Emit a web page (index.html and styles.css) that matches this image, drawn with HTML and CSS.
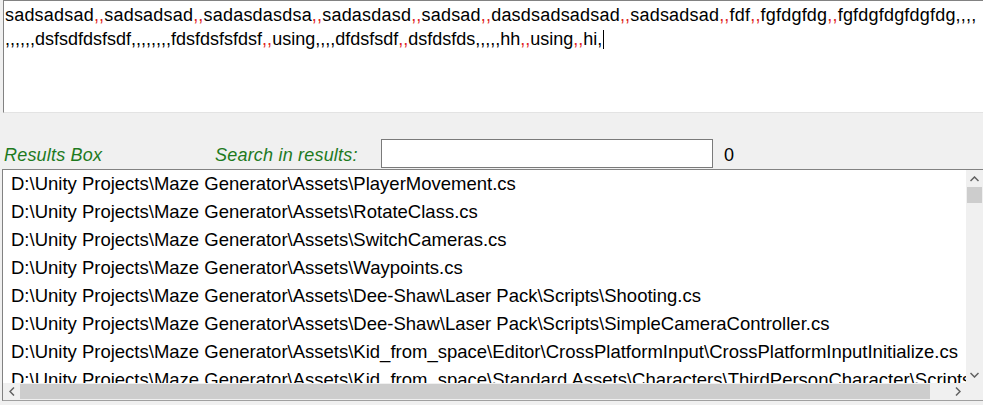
FILE: index.html
```html
<!DOCTYPE html>
<html>
<head>
<meta charset="utf-8">
<link rel="stylesheet" href="styles.css">
</head>
<body>
<div class="editor">
  <div class="line line-wide">sadsadsad<span class="r">,,</span>sadsadsad<span class="r">,,</span>sadasdasdsa<span class="r">,,</span>sadasdasd<span class="r">,,</span>sadsad<span class="r">,,</span>dasdsadsadsad<span class="r">,,</span>sadsadsad<span class="r">,,</span>fdf<span class="r">,,</span>fgfdgfdg<span class="r">,,</span>fgfdgfdgfdgfdg,,,,</div>
  <div class="line">,,,,,,dsfsdfdsfsdf,,,,,,,,fdsfdsfsfdsf<span class="r">,,</span>using,,,,dfdsfsdf<span class="r">,,</span>dsfdsfds,,,,,hh<span class="r">,,</span>using<span class="r">,,</span>hi,<span class="caret"></span></div>
</div>
<div class="toolbar">
  <span class="label label-results">Results Box</span>
  <span class="label label-search">Search in results:</span>
  <div class="search-input"></div>
  <span class="count">0</span>
</div>
<div class="list">
  <div class="rows">
    <div class="row">D:\Unity Projects\Maze Generator\Assets\PlayerMovement.cs</div>
    <div class="row">D:\Unity Projects\Maze Generator\Assets\RotateClass.cs</div>
    <div class="row">D:\Unity Projects\Maze Generator\Assets\SwitchCameras.cs</div>
    <div class="row">D:\Unity Projects\Maze Generator\Assets\Waypoints.cs</div>
    <div class="row">D:\Unity Projects\Maze Generator\Assets\Dee-Shaw\Laser Pack\Scripts\Shooting.cs</div>
    <div class="row">D:\Unity Projects\Maze Generator\Assets\Dee-Shaw\Laser Pack\Scripts\SimpleCameraController.cs</div>
    <div class="row">D:\Unity Projects\Maze Generator\Assets\Kid_from_space\Editor\CrossPlatformInput\CrossPlatformInputInitialize.cs</div>
    <div class="row">D:\Unity Projects\Maze Generator\Assets\Kid_from_space\Standard Assets\Characters\ThirdPersonCharacter\Scripts\ThirdPersonUserControl.cs</div>
  </div>
  <div class="vscroll">
    <div class="sb-btn"><svg width="9" height="6" viewBox="0 0 9 6"><polyline points="0.5,5 4.5,1 8.5,5" fill="none" stroke="#606060" stroke-width="1.5"/></svg></div>
    <div class="vtrack"><div class="vthumb"></div></div>
    <div class="sb-btn"><svg width="9" height="6" viewBox="0 0 9 6"><polyline points="0.5,1 4.5,5 8.5,1" fill="none" stroke="#606060" stroke-width="1.5"/></svg></div>
  </div>
  <div class="hscroll">
    <div class="sb-btn"><svg width="6" height="9" viewBox="0 0 6 9"><polyline points="5,0.5 1,4.5 5,8.5" fill="none" stroke="#606060" stroke-width="1.5"/></svg></div>
    <div class="htrack"><div class="hthumb"></div></div>
    <div class="sb-btn"><svg width="6" height="9" viewBox="0 0 6 9"><polyline points="1,0.5 5,4.5 1,8.5" fill="none" stroke="#606060" stroke-width="1.5"/></svg></div>
  </div>
  <div class="corner"></div>
</div>
</body>
</html>
```
FILE: styles.css
```css
html, body {
  margin: 0;
  padding: 0;
  background: #f0f0f0;
  font-family: "Liberation Sans", Arial, sans-serif;
  font-size: 18px;
  color: #000;
  overflow: hidden;
}

.editor {
  margin-left: 3px;
  height: 113px;
  box-sizing: border-box;
  background: #fff;
  border-top: 1px solid #828282;
  border-left: 1px solid #828282;
  border-bottom: 1px solid #e3e3e3;
  padding: 2px 0 0 1px;
}

.line {
  line-height: 24px;
  white-space: nowrap;
}

.line-wide {
  letter-spacing: 0.2px;
}

.r {
  color: #e02424;
}

.caret {
  display: inline-block;
  width: 0;
  height: 19px;
  border-left: 1px solid #000;
  vertical-align: -4px;
  margin-left: 1px;
}

.toolbar {
  height: 56px;
  box-sizing: border-box;
  padding-top: 26px;
  display: flex;
  align-items: flex-start;
}

.label {
  color: #1e7a1e;
  font-style: italic;
  line-height: 29px;
  padding-top: 2px;
  white-space: nowrap;
  letter-spacing: 0.2px;
}

.label-results {
  margin-left: 4px;
  width: 211px;
}

.label-search {
  width: 166px;
}

.search-input {
  width: 332px;
  height: 29px;
  box-sizing: border-box;
  background: #fff;
  border: 1px solid #7a7a7a;
}

.count {
  margin-left: 11px;
  line-height: 29px;
  padding-top: 2px;
}

.list {
  margin-left: 2px;
  height: 232px;
  box-sizing: border-box;
  background: #fff;
  border-top: 1px solid #828282;
  border-left: 1px solid #828282;
  border-bottom: 1px solid #a0a0a0;
  display: grid;
  grid-template-columns: 1fr 17px;
  grid-template-rows: 1fr 17px;
  overflow: hidden;
}

.rows {
  overflow: hidden;
  padding-left: 8px;
  font-size: 18.5px;
}

.row {
  line-height: 28px;
  height: 28px;
  white-space: nowrap;
}

.vscroll {
  background: #f0f0f0;
  display: flex;
  flex-direction: column;
}

.sb-btn {
  width: 17px;
  height: 17px;
  flex: 0 0 17px;
  display: flex;
  align-items: center;
  justify-content: center;
}

.vtrack {
  flex: 1;
}

.vthumb {
  height: 16px;
  background: #cdcdcd;
  margin: 0 1px;
}

.hscroll {
  background: #f0f0f0;
  display: flex;
}

.htrack {
  flex: 1;
  display: flex;
  align-items: stretch;
  padding: 1px 0;
}

.hthumb {
  width: 910px;
  background: #cdcdcd;
}

.corner {
  background: #f0f0f0;
}
```
